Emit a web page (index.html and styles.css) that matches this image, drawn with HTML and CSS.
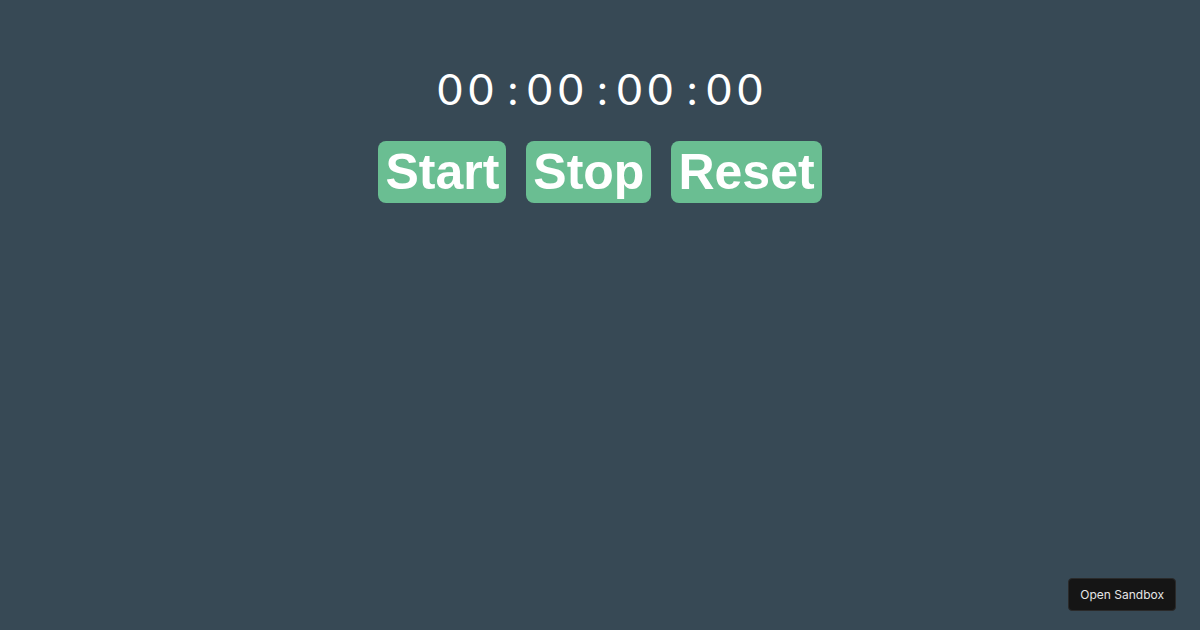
FILE: index.html
```html
<!DOCTYPE html>
<html lang="en">
<head>
    <meta charset="UTF-8">
    <meta name="viewport" content="width=device-width, initial-scale=1.0">
    <title>Stopwatch</title>
    <link rel="stylesheet" href="styles.css">
</head>
<body>
    <div class="stopwatch">
        <div class="time">
            <span class="unit" id="hours">00</span><span class="sep">:</span><span class="unit" id="minutes">00</span><span class="sep">:</span><span class="unit" id="seconds">00</span><span class="sep">:</span><span class="unit" id="centis">00</span>
        </div>
        <div class="controls">
            <button class="btn" onclick="start()">Start</button>
            <button class="btn" onclick="stop()">Stop</button>
            <button class="btn" onclick="reset()">Reset</button>
        </div>
    </div>
    <a class="sandbox-link" href="#">Open Sandbox</a>

    <script>
        let timer = null;
        let elapsed = 0;
        let startedAt = 0;

        function pad(n) {
            return String(n).padStart(2, '0');
        }

        function render() {
            const ms = elapsed + (timer ? Date.now() - startedAt : 0);
            document.getElementById('hours').textContent = pad(Math.floor(ms / 3600000));
            document.getElementById('minutes').textContent = pad(Math.floor(ms / 60000) % 60);
            document.getElementById('seconds').textContent = pad(Math.floor(ms / 1000) % 60);
            document.getElementById('centis').textContent = pad(Math.floor(ms / 10) % 100);
        }

        function start() {
            if (timer) return;
            startedAt = Date.now();
            timer = setInterval(render, 10);
        }

        function stop() {
            if (!timer) return;
            elapsed += Date.now() - startedAt;
            clearInterval(timer);
            timer = null;
            render();
        }

        function reset() {
            clearInterval(timer);
            timer = null;
            elapsed = 0;
            render();
        }
    </script>
</body>
</html>
```

FILE: styles.css
```css
html, body {
    height: 100%;
}
body {
    margin: 0;
    background-color: #374955;
    font-family: "Liberation Sans", Arial, sans-serif;
    color: #fff;
}
.stopwatch {
    display: flex;
    flex-direction: column;
    align-items: center;
    padding-top: 63px;
}
.time {
    display: flex;
    /* letter-spacing leaves a trailing gap after the last digit */
    padding-left: 6px;
    font-family: Lato, sans-serif;
    font-size: 43px;
    line-height: 52px;
}
.unit {
    letter-spacing: 6px;
}
.sep {
    margin: 0 9px 0 8px;
}
.controls {
    display: flex;
    gap: 20px;
    margin-top: 26px;
}
.btn {
    background-color: #6abe92;
    color: #fff;
    font-family: "Liberation Sans", Arial, sans-serif;
    font-weight: bold;
    font-size: 50px;
    line-height: 58px;
    padding: 2px 7px;
    border: none;
    border-radius: 8px;
    cursor: pointer;
}
.sandbox-link {
    position: fixed;
    right: 24px;
    bottom: 19px;
    background-color: #151515;
    color: #e6e6e6;
    font-family: Inter, sans-serif;
    font-size: 12px;
    line-height: 31px;
    padding: 0 11px;
    border-radius: 4px;
    border: 1px solid #2a2a2a;
    text-decoration: none;
}
```
